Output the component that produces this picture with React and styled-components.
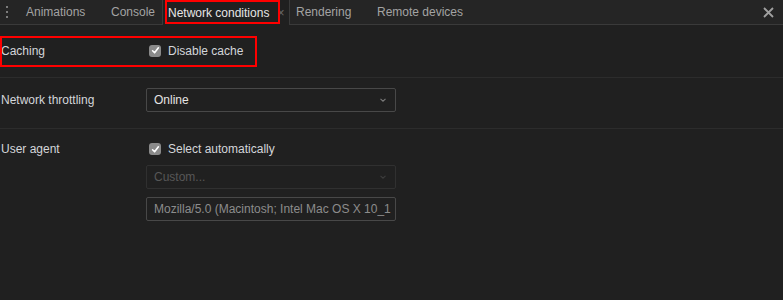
import React from "react";
import styled, { createGlobalStyle } from "styled-components";

const GlobalStyle = createGlobalStyle`
  html, body {
    margin: 0;
    padding: 0;
    background: #202020;
  }
  body {
    font-family: "Liberation Sans", Arial, Helvetica, sans-serif;
    font-size: 12px;
    color: #d2d2d2;
  }
`;

const Page = styled.div`
  width: 783px;
  height: 300px;
  background: #202020;
  overflow: hidden;
`;

const TabBar = styled.div`
  display: flex;
  align-items: stretch;
  height: 24px;
  background: #252525;
  border-bottom: 1px solid #3a3a3a;
`;

const Dots = styled.div`
  width: 14px;
  display: flex;
  flex-direction: column;
  align-items: center;
  justify-content: center;
  gap: 3px;
  span {
    width: 2px;
    height: 2px;
    border-radius: 1px;
    background: #9a9a9a;
  }
`;

const Tab = styled.div`
  position: relative;
  display: flex;
  align-items: center;
  box-sizing: border-box;
  width: ${(p) => p.$w}px;
  padding-left: ${(p) => p.$pl}px;
  color: ${(p) => (p.$active ? "#e6e6e6" : "#a3a3a3")};
  background: ${(p) => (p.$active ? "#202020" : "transparent")};
  border-left: ${(p) => (p.$active ? "1px solid #3a3a3a" : "none")};
  border-right: ${(p) => (p.$active ? "1px solid #3a3a3a" : "none")};
  margin-bottom: ${(p) => (p.$active ? "-1px" : "0")};
  white-space: nowrap;
`;

const TabClose = styled.span`
  margin-left: 8px;
  color: #6a6a6a;
  font-size: 12px;
`;

const Spacer = styled.div`
  flex: 1;
`;

const CloseButton = styled.div`
  width: 30px;
  display: flex;
  align-items: center;
  justify-content: center;
`;

const Highlight = styled.div`
  position: absolute;
  left: ${(p) => p.$l}px;
  top: ${(p) => p.$t}px;
  width: ${(p) => p.$w}px;
  height: ${(p) => p.$h}px;
  border: 2px solid #f00;
  box-sizing: border-box;
  pointer-events: none;
`;

const Section = styled.div`
  display: flex;
  padding: ${(p) => p.$pad};
  border-bottom: ${(p) => (p.$last ? "none" : "1px solid #2c2c2c")};
  position: relative;
`;

const Label = styled.div`
  width: 145px;
  padding-left: 1px;
  height: ${(p) => p.$h || 23}px;
  display: flex;
  align-items: center;
  color: #d4d6da;
`;

const Controls = styled.div`
  display: flex;
  flex-direction: column;
`;

const CheckRow = styled.label`
  display: flex;
  align-items: center;
  height: ${(p) => p.$h || 23}px;
  padding-left: 3px;
  gap: 7px;
  color: #d4d6da;
`;

const Box = styled.span`
  width: 12px;
  height: 12px;
  border-radius: 3px;
  background: #8a8a8a;
  display: flex;
  align-items: center;
  justify-content: center;
`;

const Field = styled.div`
  box-sizing: border-box;
  width: 250px;
  height: 24px;
  margin-top: ${(p) => p.$mt || 0}px;
  display: flex;
  align-items: center;
  justify-content: space-between;
  padding: 0 8px 0 7px;
  border: 1px solid ${(p) => (p.$disabled ? "#303030" : "#484848")};
  border-radius: 2px;
  background: #202020;
  color: ${(p) => p.$color};
  white-space: nowrap;
  overflow: hidden;
`;

function Check() {
  return (
    <Box>
      <svg width="9" height="9" viewBox="0 0 9 9">
        <path d="M1.6 4.8 L3.6 6.8 L7.4 1.8" fill="none" stroke="#fff" strokeWidth="1.6" strokeLinecap="round" strokeLinejoin="round" />
      </svg>
    </Box>
  );
}

function Chevron({ color }) {
  return (
    <svg width="8" height="6" viewBox="0 0 8 6">
      <path d="M1.5 1.8 L4 4.2 L6.5 1.8" fill="none" stroke={color} strokeWidth="1.1" />
    </svg>
  );
}

export default function App() {
  return (
    <Page>
      <GlobalStyle />
      <TabBar>
        <Dots>
          <span />
          <span />
          <span />
        </Dots>
        <Tab $w={85} $pl={12}>Animations</Tab>
        <Tab $w={63} $pl={12}>Console</Tab>
        <Tab $w={128} $pl={5} $active>
          Network conditions
          <TabClose>×</TabClose>
          <Highlight $l={2} $t={0} $w={115} $h={24} />
        </Tab>
        <Tab $w={81} $pl={6}>Rendering</Tab>
        <Tab $w={120} $pl={6}>Remote devices</Tab>
        <Spacer />
        <CloseButton>
          <svg width="11" height="11" viewBox="0 0 11 11">
            <path d="M1 1 L10 10 M10 1 L1 10" stroke="#a0a0a0" strokeWidth="1.8" />
          </svg>
        </CloseButton>
      </TabBar>

      <Section $pad="14px 0 15px">
        <Label>Caching</Label>
        <Controls>
          <CheckRow>
            <Check />
            Disable cache
          </CheckRow>
        </Controls>
        <Highlight $l={0} $t={11} $w={257} $h={31} />
      </Section>

      <Section $pad="10px 0 16px">
        <Label>Network throttling</Label>
        <Controls>
          <Field $color="#e4e4e4">
            Online
            <Chevron color="#7a7a7a" />
          </Field>
        </Controls>
      </Section>

      <Section $pad="9px 0 0" $last>
        <Label $h={22}>User agent</Label>
        <Controls>
          <CheckRow $h={22}>
            <Check />
            Select automatically
          </CheckRow>
          <Field $mt={5} $disabled $color="#575757">
            Custom...
            <Chevron color="#3c3c3c" />
          </Field>
          <Field $mt={8} $color="#8c8c8c">Mozilla/5.0 (Macintosh; Intel Mac OS X 10_1</Field>
        </Controls>
      </Section>
    </Page>
  );
}
